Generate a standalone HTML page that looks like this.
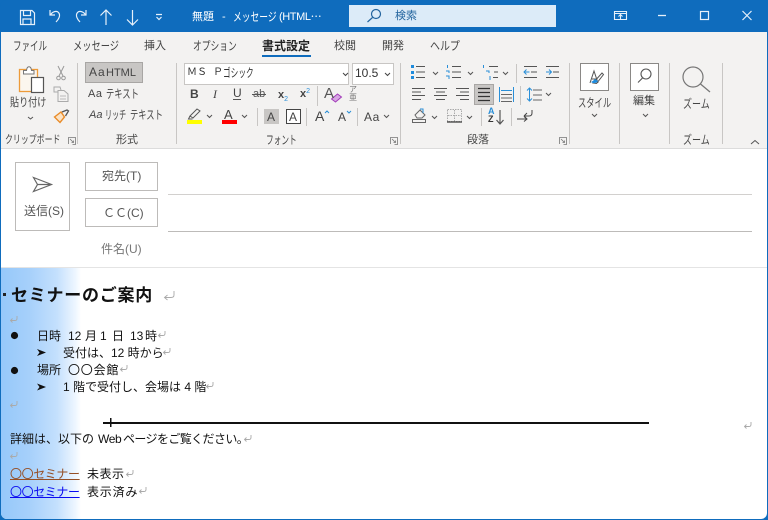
<!DOCTYPE html>
<html lang="ja"><head><meta charset="utf-8"><title>無題 - メッセージ</title>
<style>
html,body{margin:0;padding:0;background:#fff}
#w{position:relative;width:768px;height:520px;overflow:hidden;background:#0f6cbd;font-family:"Liberation Sans","Noto Sans CJK JP",sans-serif}
.a{position:absolute}
.t{position:absolute;white-space:nowrap;font-size:11px;line-height:14px;color:#444;letter-spacing:0;transform-origin:0 50%}
.k{font-size:12px}
.d{color:#fff}
.b{color:#111;font-size:12px;line-height:16px;letter-spacing:0}
.v{position:absolute;width:1px;background:#c8c6c4}
svg{position:absolute;left:0;top:0}
</style></head><body>
<div id="w">
<div class="a" style="left:0;top:0;width:768px;height:32px;background:#0f6cbd;border-radius:7px 7px 0 0"></div>
<div class="a" style="left:1px;top:32px;width:766px;height:116px;background:#f3f2f1"></div>
<div class="a" style="left:1px;top:148px;width:766px;height:371px;background:#fff;border-radius:0 0 6px 6px"></div>
<div class="a" style="left:1px;top:148px;width:766px;height:1px;background:#dcdcdc"></div>
<div class="a" style="left:1px;top:267px;width:766px;height:1px;background:#e4e4e4"></div>
<div class="a" style="left:1px;top:268px;width:80px;height:251px;border-radius:0 0 0 6px;background:linear-gradient(90deg,#96c8fa 0%,#a6d0fb 35%,#c4e0fd 70%,#eef6ff 93%,#fff 100%)"></div>
<div class="a" style="left:349px;top:5px;width:207px;height:22px;background:#dcebf8"></div>
<div class="a" style="left:85px;top:62px;width:58px;height:21px;background:#c8c6c4;border:1px solid #a8a6a4;box-sizing:border-box"></div>
<div class="a" style="left:474px;top:84px;width:20px;height:21px;background:#c8c6c4;border:1px solid #a8a6a4;box-sizing:border-box"></div>
<div class="a" style="left:262px;top:55px;width:49px;height:2px;background:#0f6cbd"></div>
<div class="a" style="left:184px;top:63px;width:165px;height:22px;background:#fff;border:1px solid #c8c6c4;box-sizing:border-box"></div>
<div class="a" style="left:352px;top:63px;width:42px;height:22px;background:#fff;border:1px solid #c8c6c4;box-sizing:border-box"></div>
<div class="a" style="left:580px;top:63px;width:29px;height:28px;background:#fff;border:1px solid #8a8886;box-sizing:border-box"></div>
<div class="a" style="left:630px;top:63px;width:29px;height:28px;background:#fff;border:1px solid #8a8886;box-sizing:border-box"></div>
<div class="a" style="left:15px;top:162px;width:55px;height:69px;background:#fff;border:1px solid #bdbbb9;box-sizing:border-box"></div>
<div class="a" style="left:85px;top:162px;width:73px;height:29px;background:#fff;border:1px solid #bdbbb9;box-sizing:border-box"></div>
<div class="a" style="left:85px;top:198px;width:73px;height:29px;background:#fff;border:1px solid #bdbbb9;box-sizing:border-box"></div>
<div class="a" style="left:168px;top:194px;width:584px;height:1px;background:#d2d0ce"></div>
<div class="a" style="left:168px;top:231px;width:584px;height:1px;background:#bdbbb9"></div>
<div class="v" style="left:77px;top:63px;height:81px"></div>
<div class="v" style="left:176px;top:63px;height:81px"></div>
<div class="v" style="left:400px;top:63px;height:81px"></div>
<div class="v" style="left:569px;top:63px;height:81px"></div>
<div class="v" style="left:619px;top:63px;height:81px"></div>
<div class="v" style="left:669px;top:63px;height:81px"></div>
<div class="v" style="left:722px;top:63px;height:81px"></div>
<div class="v" style="left:317px;top:86px;height:20px"></div>
<div class="v" style="left:257px;top:108px;height:18px"></div>
<div class="v" style="left:306px;top:108px;height:18px"></div>
<div class="v" style="left:357px;top:108px;height:18px"></div>
<div class="v" style="left:516px;top:64px;height:19px"></div>
<div class="v" style="left:520px;top:86px;height:19px"></div>
<div class="v" style="left:481px;top:108px;height:18px"></div>
<div class="v" style="left:511px;top:108px;height:18px"></div>

<svg width="768" height="520" viewBox="0 0 768 520" fill="none">
<!-- title icons -->
<g stroke="#e6f0fa" stroke-width="1.2">
<path d="M20.500 10.500h11.500l2.500 2.500v11.500h-14z"/><path d="M23.500 10.500v5h7v-5M23 24.500v-5.500h8v5.500"/>
<path d="M50 10v5h5M50.500 15c1.500-3 6-5 8-2.500 2.500 3 0 7-2.500 9.500"/>
<path d="M86 10v5h-5M85.500 15c-1.500-3-6-5-8-2.500-2.500 3 0 7 2.500 9.500"/>
<path d="M106 25V10M100.500 15.500l5.500-5.500 5.500 5.500"/>
<path d="M132.500 10v15M127 19.500l5.500 5.500 5.500-5.500"/>
<path d="M156 14.500h6M156.500 17l2.500 2.500 2.500-2.500"/>
<circle cx="376" cy="14" r="4.500" stroke="#23649e"/><path d="M372.500 17.500l-5 4.500" stroke="#23649e"/>
<path d="M614.500 11.500h12v8h-12zM614.500 13.500h12M620.500 19v-4M618.500 16.500l2-2 2 2" stroke-width="1.100"/>
<path d="M658 15.500h8" stroke-width="1.300"/>
<rect x="700.500" y="11.500" width="8" height="8"/>
<path d="M742.500 11l9 9M751.500 11l-9 9" stroke-width="1.200"/>
</g>
<!-- clipboard -->
<rect x="19.500" y="69.500" width="18" height="22" fill="#fbf6ee" stroke="#ed9b3a" stroke-width="1.300"/>
<path d="M23.500 74v-3.500h3c.5-5 4.500-5 5 0h2.500v3.500z" fill="#fff" stroke="#777"/>
<rect x="31.500" y="77.500" width="12" height="15" fill="#fff" stroke="#555" stroke-width="1.200"/>
<path d="M28 117l2.500 2 2.500-2" stroke="#555"/>
<!-- cut, copy, brush -->
<path d="M58 66l5 10M64 66l-5 10" stroke="#999"/><circle cx="58.500" cy="78" r="1.800" stroke="#999"/><circle cx="63.500" cy="78" r="1.800" stroke="#999"/>
<path d="M58 92h-4v-5h6l1 3M58 90.500h6l4 3.500v7.500h-10z" stroke="#aaa"/><path d="M60 96h6M60 99h6" stroke="#bbb"/>
<path d="M54.500 117l6.500-5 3.500 5-4.500 5.500z" stroke="#e98b28" stroke-width="1.400" fill="#fbe3c5"/><path d="M62 112l5-2 1.500 1-3 5" stroke="#555" stroke-width="1.300"/>
<!-- launchers -->
<g stroke="#777" stroke-width=".8">
<path d="M68.500 144v-6.500h7v7h-3M70 139l3.500 3.500M73.500 140.500v2h-2"/>
<path d="M390.500 144v-6.500h7v7h-3M392 139l3.500 3.500M395.500 140.500v2h-2"/>
<path d="M559.500 144v-6.500h7v7h-3M561 139l3.500 3.500M564.500 140.500v2h-2"/>
</g>
<!-- font row -->
<path d="M343 73l2.500 2.500 2.500-2.500M385 73l2.500 2.500 2.500-2.500" stroke="#444"/>
<path d="M233 99.500h8" stroke="#555"/>
<path d="M252 94.500h14" stroke="#555"/>
<path d="M331.500 99l6-5 4 3-6 5z" stroke="#a23cb9" fill="#d8a6e4"/>
<rect x="187" y="120" width="15" height="4" fill="#ff0"/>
<path d="M190 116l7-7 3 2-7 7zM190 116l-1.500 3h4" stroke="#555"/>
<rect x="222" y="120" width="15" height="4" fill="#f00"/>
<path d="M207 115l2.500 2.500 2.500-2.500M242 115l2.500 2.500 2.500-2.500" stroke="#555"/>
<rect x="264" y="109" width="15" height="15" fill="#c8c6c4"/>
<rect x="286.500" y="109.500" width="14" height="14" fill="#fff" stroke="#444"/>
<path d="M325 113l2-2 2 2M347 111l2 2 2-2" stroke="#2a8fd8"/>
<path d="M384 115l2.500 2.500 2.500-2.500" stroke="#555"/>
<!-- paragraph row 1 -->
<g fill="#1e8bdc"><rect x="411" y="65" width="3" height="3"/><rect x="411" y="71" width="3" height="3"/><rect x="411" y="76" width="3" height="3"/></g>
<path d="M416 66.500h9M416 72h9M416 77.500h9M452 66.500h9M452 72h9M452 77.500h9M489 66.500h9M494 72h4M493 77.500h5" stroke="#555"/>
<path d="M447.500 65v3M446 71h3v2M446 76h3v3M483.500 65v3M486 71h3v2M490 76v4" stroke="#2a8fd8"/>
<path d="M433 72l2.500 2.500 2.500-2.500M468 72l2.500 2.500 2.500-2.500M503 72l2.500 2.500 2.500-2.500" stroke="#555"/>
<path d="M524 66.500h13M531 72h6M524 77.500h13M546 66.500h13M553 72h6M546 77.500h13" stroke="#555"/>
<path d="M529.500 72h-5.500M526.500 69.500l-2.500 2.500 2.500 2.500M546 72h5.500M549 69.500l2.500 2.500-2.500 2.500" stroke="#2a8fd8"/>
<!-- row 2 -->
<path d="M412 88.500h13M412 92h9M412 95.500h13M412 99.500h9M434 88.500h13M436 92h9M434 95.500h13M436 99.500h9M456 88.500h13M460 92h9M456 95.500h13M460 99.500h9" stroke="#555"/>
<path d="M478 88.500h12M478 92.500h12M478 96.500h12M478 100.500h12" stroke="#333" stroke-width="1.200"/>
<path d="M499.500 87v15M513.500 87v15M501 90.500h11" stroke="#2a8fd8"/><path d="M501 94.500h11M501 98h11M501 101.500h11" stroke="#666"/>
<path d="M529.500 88v13M527 90.500l2.500-2.500 2.500 2.500M527 98.500l2.500 2.500 2.500-2.500" stroke="#2a8fd8"/>
<path d="M533 90h9M533 95h9M533 100h9" stroke="#666"/>
<path d="M546 93l2.500 2.500 2.500-2.500" stroke="#555"/>
<!-- row 3 -->
<path d="M412.500 119.500h13v3h-13zM415 115l5-5 5 5-3 3h-5z" stroke="#666"/><path d="M420 109h3v4" stroke="#2a8fd8"/>
<path d="M432 116l2.500 2.500 2.500-2.500M467 116l2.500 2.500 2.500-2.500" stroke="#555"/>
<path d="M447.500 109.500h14v12h-14z" stroke="#aaa" stroke-dasharray="1.500 1"/><path d="M447 122h15" stroke="#333" stroke-width="1.200"/><path d="M454.500 110v11M448 115.500h13" stroke="#aaa" stroke-dasharray="1.500 1"/>
<path d="M500 110v14M496.500 120l3.500 4 3.500-4" stroke="#555" stroke-width="1.200"/>
<path d="M517 119h10M524 116.500l3 2.500-3 2.500M524 116h5c2 0 3-1 3-3v-3M524 116l3-3M524 116l3 3" stroke="#444"/>
<!-- style, edit, zoom -->
<path d="M590 83l4-12 4 12M592 79h5" stroke="#555"/><path d="M593 83l9-10 1.500 1.500-7 9z" stroke="#555"/><path d="M591 82c2-1 3-2 4-3l3 2c-1 2-4 3-7 1z" fill="#1e8bdc"/>
<circle cx="646" cy="74" r="5" stroke="#555" stroke-width="1.100"/><path d="M642.500 78l-4.500 4.500" stroke="#555" stroke-width="1.100"/>
<circle cx="693" cy="77" r="10" stroke="#777" stroke-width="1.200"/><path d="M700.500 84l9.500 8" stroke="#777" stroke-width="1.300"/>
<path d="M592 114l2.500 2.500 2.500-2.500M643 114l2.500 2.500 2.500-2.500" stroke="#555"/>
<path d="M751 144l4-3.500 4 3.500" stroke="#555"/>
<!-- send -->
<path d="M33.500 177.500l18 7-18 7 4-7zM37.500 184.500h14" stroke="#666" stroke-width="1.200"/>
<!-- hr -->
<rect x="103" y="422" width="546" height="2" fill="#111"/><rect x="110" y="418" width="1.500" height="9" fill="#111"/>
<!-- paragraph marks -->
<g stroke="#aaa" stroke-width=".9">
<path d="M174 291v4c0 2-1 2.500-3 2.500h-6M167.500 295l-3 2.500 3 2.500"/>
<path d="M17 316v2.500c0 1.500-.5 2-2 2h-4.500M12.500 318.500l-2 2 2 2"/>
<path d="M165 331v2.500c0 1.500-.5 2-2 2h-4.500M160.500 333.500l-2 2 2 2"/>
<path d="M170 348v2.500c0 1.500-.5 2-2 2h-4.500M165.500 350.500l-2 2 2 2"/>
<path d="M127 365v2.500c0 1.500-.5 2-2 2h-4.500M122.500 367.500l-2 2 2 2"/>
<path d="M213 382v2.500c0 1.500-.5 2-2 2h-4.500M208.500 384.500l-2 2 2 2"/>
<path d="M17 401v2.500c0 1.500-.5 2-2 2h-4.500M12.500 403.500l-2 2 2 2"/>
<path d="M751 422v2.500c0 1.500-.5 2-2 2h-4.500M746.500 424.500l-2 2 2 2"/>
<path d="M251 435v2.500c0 1.500-.5 2-2 2h-4.500M246.500 437.500l-2 2 2 2"/>
<path d="M17 452v2.500c0 1.500-.5 2-2 2h-4.500M12.500 454.500l-2 2 2 2"/>
<path d="M133 470v2.500c0 1.500-.5 2-2 2h-4.500M128.500 472.500l-2 2 2 2"/>
<path d="M146 487v2.500c0 1.500-.5 2-2 2h-4.500M141.500 489.500l-2 2 2 2"/>
</g>
<circle cx="14.500" cy="335.500" r="3.600" fill="#111"/><circle cx="14.500" cy="370.500" r="3.600" fill="#111"/>
<path d="M37 349l9 3.500-9 3.500 2.500-3.500zM37 383.500l9 3.500-9 3.500 2.500-3.500z" fill="#111"/>
<rect x="3" y="293" width="3" height="3" fill="#222"/>
</svg>

<!-- title text -->
<div class="t d" style="left:192px;top:10px">無題</div>
<div class="t d" style="left:222px;top:10px">-</div>
<div class="t d k" style="left:233px;top:10px;transform:scaleX(.73)">メッセージ</div>
<div class="t d" style="left:279px;top:10px;letter-spacing:-.4px">(HTML⋯</div>
<div class="t" style="left:395px;top:9px;color:#23649e">検索</div>
<!-- tabs -->
<div class="t k" style="left:13px;top:39px;transform:scaleX(.71)">ファイル</div>
<div class="t k" style="left:73px;top:39px;transform:scaleX(.77)">メッセージ</div>
<div class="t" style="left:144px;top:39px">挿入</div>
<div class="t k" style="left:193px;top:39px;transform:scaleX(.73)">オプション</div>
<div class="t k" style="left:262px;top:39px;color:#222;font-weight:bold">書式設定</div>
<div class="t" style="left:334px;top:39px">校閲</div>
<div class="t" style="left:382px;top:39px">開発</div>
<div class="t k" style="left:430px;top:39px;transform:scaleX(.83)">ヘルプ</div>
<!-- clip -->
<div class="t" style="left:10px;top:96px;font-size:11.500px;transform:scaleX(.79)">貼り付け</div>
<div class="t" style="left:5px;top:133px;font-size:11px;transform:scaleX(.72)">クリップボード</div>
<div class="t" style="left:89px;top:65px;font-size:12px;letter-spacing:1px">Aa</div>
<div class="t" style="left:106px;top:66px;font-size:11px">HTML</div>
<div class="t" style="left:88px;top:87px;font-size:11px;letter-spacing:.6px">Aa</div>
<div class="t k" style="left:106px;top:87px;transform:scaleX(.69)">テキスト</div>
<div class="t" style="left:89px;top:108px;font-size:11px;font-style:italic">Aa</div>
<div class="t k" style="left:105px;top:108px;transform:scaleX(.59)">リッチ</div>
<div class="t k" style="left:130px;top:108px;transform:scaleX(.69)">テキスト</div>
<div class="t" style="left:116px;top:133px">形式</div>
<!-- font -->
<div class="t" style="left:187px;top:66px;color:#333;font-size:10px">ＭＳ</div>
<div class="t" style="left:213px;top:66px;color:#333;font-size:10px">Ｐ</div>
<div class="t k" style="left:223px;top:66px;color:#333;transform:scaleX(.64)">ゴシック</div>
<div class="t" style="left:355px;top:66px;font-size:12px;color:#333">10.5</div>
<div class="t" style="left:190px;top:87px;font-weight:bold;font-size:12px">B</div>
<div class="t" style="left:213px;top:87px;font-style:italic;font-size:12px;font-family:'Liberation Serif',serif">I</div>
<div class="t" style="left:233px;top:86px;font-size:12px">U</div>
<div class="t" style="left:253px;top:87px;color:#555">ab</div>
<div class="t" style="left:278px;top:88px;font-weight:bold">x<span style="font-size:7px;color:#2a8fd8;position:relative;top:3px;font-weight:normal">2</span></div>
<div class="t" style="left:300px;top:87px;font-weight:bold">x<span style="font-size:7px;color:#2a8fd8;position:relative;top:-4px;font-weight:normal">2</span></div>
<div class="t" style="left:324px;top:87px;font-size:15px;color:#555">A</div>
<div class="t" style="left:349px;top:86px;font-size:8px;line-height:8px;color:#777">ア<br>亜</div>
<div class="t" style="left:224px;top:108px;font-size:13px">A</div>
<div class="t" style="left:267px;top:110px;font-size:12px">A</div>
<div class="t" style="left:289px;top:110px;font-size:12px">A</div>
<div class="t" style="left:315px;top:109px;font-size:14px">A</div>
<div class="t" style="left:338px;top:110px;font-size:12px">A</div>
<div class="t" style="left:364px;top:110px;font-size:12px;letter-spacing:.6px">Aa</div>
<div class="t k" style="left:266px;top:133px;transform:scaleX(.64)">フォント</div>
<div class="t" style="left:467px;top:133px">段落</div>
<div class="t" style="left:488px;top:108px;font-size:9px;line-height:7.500px;font-weight:bold;color:#333"><span style="color:#2a8fd8">A</span><br>Z</div>
<div class="t k" style="left:578px;top:96px;transform:scaleX(.69)">スタイル</div>
<div class="t" style="left:633px;top:94px">編集</div>
<div class="t k" style="left:683px;top:97px;transform:scaleX(.75)">ズーム</div>
<div class="t k" style="left:683px;top:133px;transform:scaleX(.75)">ズーム</div>
<!-- header -->
<div class="t" style="left:24px;top:204px;font-size:12px;color:#555">送信(S)</div>
<div class="t" style="left:102px;top:169px;font-size:12px;color:#555">宛先(T)</div>
<div class="t" style="left:103px;top:206px;font-size:12px;color:#555">ＣＣ(C)</div>
<div class="t" style="left:101px;top:242px;font-size:12px;color:#777">件名(U)</div>
<!-- body -->
<div class="t" style="left:11px;top:285px;font-size:17px;line-height:22px;font-weight:bold;color:#111;letter-spacing:.75px">セミナーのご案内</div>
<div class="t b" style="left:37px;top:328px">日時</div>
<div class="t b" style="left:68px;top:328px">12</div>
<div class="t b" style="left:85px;top:328px">月</div>
<div class="t b" style="left:100px;top:328px">1</div>
<div class="t b" style="left:112px;top:328px">日</div>
<div class="t b" style="left:130px;top:328px">13</div>
<div class="t b" style="left:145px;top:328px">時</div>
<div class="t b" style="left:63px;top:345px">受付は、12 時から</div>
<div class="t b" style="left:37px;top:362px">場所</div>
<div class="t b" style="left:68px;top:362px;letter-spacing:.8px">〇〇会館</div>
<div class="t b" style="left:63px;top:379px">1 階で受付し、会場は 4 階</div>
<div class="t b" style="left:10px;top:431px">詳細は、以下の</div>
<div class="t b" style="left:98px;top:431px;letter-spacing:-.4px">Web</div>
<div class="t b" style="left:123px;top:431px;letter-spacing:-.6px">ページをご覧ください。</div>
<div class="t b" style="left:10px;top:466px;color:#954f26;text-decoration:underline;letter-spacing:-.4px">〇〇セミナー</div>
<div class="t b" style="left:87px;top:466px;letter-spacing:.5px">未表示</div>
<div class="t b" style="left:10px;top:484px;color:#0b0bf0;text-decoration:underline;letter-spacing:-.4px">〇〇セミナー</div>
<div class="t b" style="left:87px;top:484px;letter-spacing:.8px">表示済み</div>
</div>
</body></html>
